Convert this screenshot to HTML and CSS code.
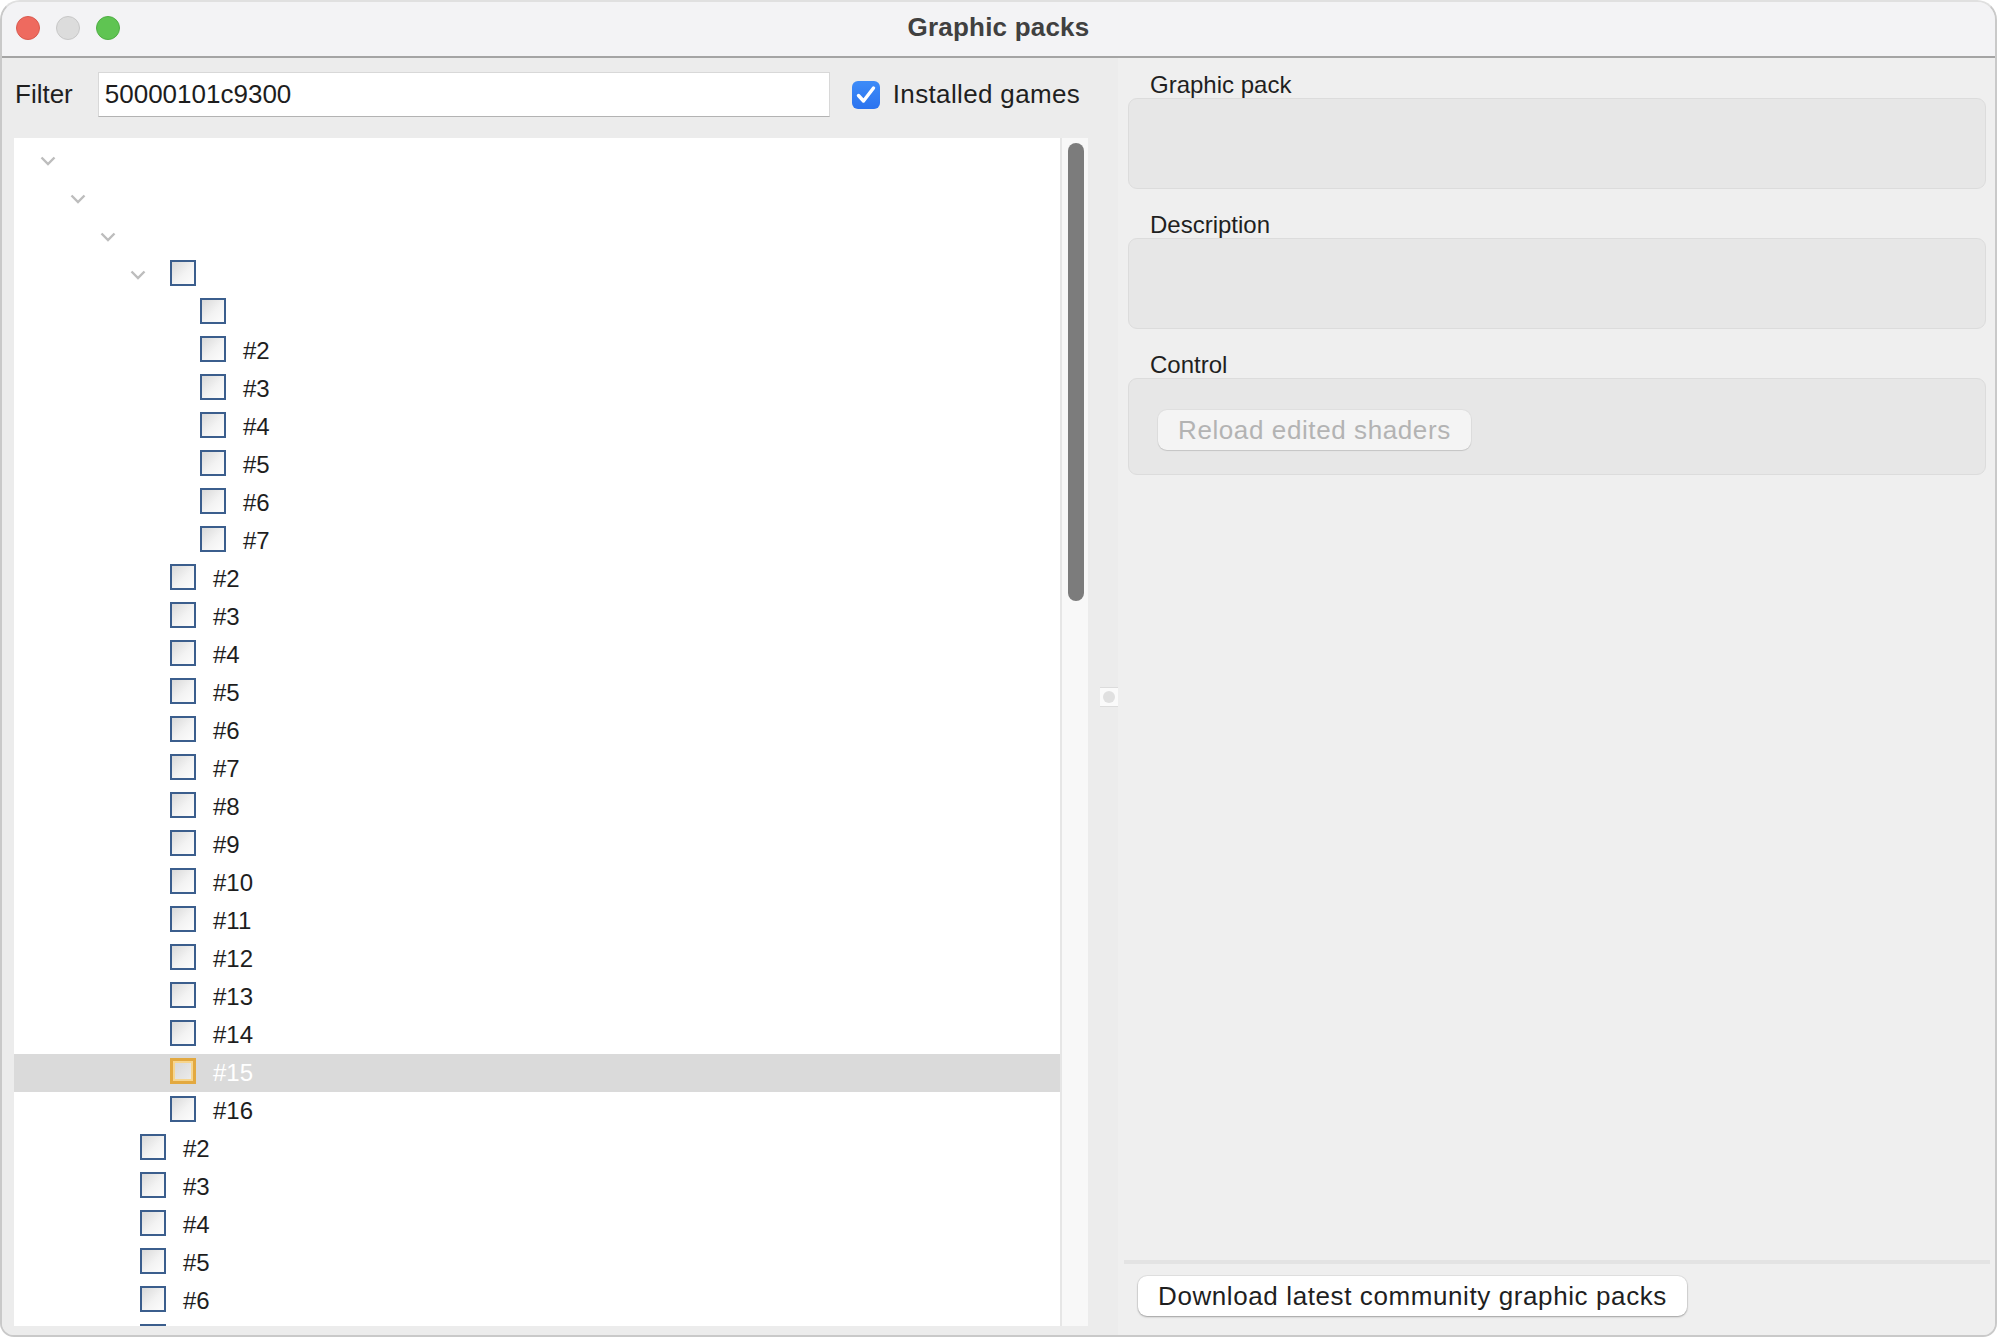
FILE: index.html
```html
<!DOCTYPE html>
<html lang="en">
<head>
    <meta charset="UTF-8">
    <title>Graphic packs</title>
    <link rel="stylesheet" href="styles.css">
</head>
<body>
    <div class="window">
        <div class="titlebar">
            <div class="lights">
                <span class="light red"></span>
                <span class="light gray"></span>
                <span class="light green"></span>
            </div>
            <div class="title">Graphic packs</div>
            <div></div>
        </div>

        <div class="content">
            <!-- left: filter + tree -->
            <div class="left-panel">
                <div class="filter-row">
                    <label class="filter-label">Filter</label>
                    <div class="filter-input">50000101c9300</div>
                    <span class="mac-check">
                        <svg width="28" height="28" viewBox="0 0 28 28"><path d="M6.5 14.5 L11.5 20 L21.5 7" fill="none" stroke="#fff" stroke-width="3.4" stroke-linecap="round" stroke-linejoin="round"/></svg>
                    </span>
                    <span class="check-label">Installed games</span>
                </div>

                <div class="tree-wrap">
                    <div class="tree">
                        <div class="row d0"><span class="tog"><svg width="16" height="10" viewBox="0 0 16 10"><polyline points="1.5,1.5 8,8 14.5,1.5" fill="none" stroke="#bdbdbd" stroke-width="2.4"/></svg></span></div>
                        <div class="row d1"><span class="tog"><svg width="16" height="10" viewBox="0 0 16 10"><polyline points="1.5,1.5 8,8 14.5,1.5" fill="none" stroke="#bdbdbd" stroke-width="2.4"/></svg></span></div>
                        <div class="row d2"><span class="tog"><svg width="16" height="10" viewBox="0 0 16 10"><polyline points="1.5,1.5 8,8 14.5,1.5" fill="none" stroke="#bdbdbd" stroke-width="2.4"/></svg></span></div>
                        <div class="row d3"><span class="tog"><svg width="16" height="10" viewBox="0 0 16 10"><polyline points="1.5,1.5 8,8 14.5,1.5" fill="none" stroke="#bdbdbd" stroke-width="2.4"/></svg></span><span class="cb"></span></div>
                        <div class="row d4"><span class="tog"></span><span class="cb"></span></div>
                        <div class="row d4"><span class="tog"></span><span class="cb"></span><span class="lbl">#2</span></div>
                        <div class="row d4"><span class="tog"></span><span class="cb"></span><span class="lbl">#3</span></div>
                        <div class="row d4"><span class="tog"></span><span class="cb"></span><span class="lbl">#4</span></div>
                        <div class="row d4"><span class="tog"></span><span class="cb"></span><span class="lbl">#5</span></div>
                        <div class="row d4"><span class="tog"></span><span class="cb"></span><span class="lbl">#6</span></div>
                        <div class="row d4"><span class="tog"></span><span class="cb"></span><span class="lbl">#7</span></div>
                        <div class="row d3"><span class="tog"></span><span class="cb"></span><span class="lbl">#2</span></div>
                        <div class="row d3"><span class="tog"></span><span class="cb"></span><span class="lbl">#3</span></div>
                        <div class="row d3"><span class="tog"></span><span class="cb"></span><span class="lbl">#4</span></div>
                        <div class="row d3"><span class="tog"></span><span class="cb"></span><span class="lbl">#5</span></div>
                        <div class="row d3"><span class="tog"></span><span class="cb"></span><span class="lbl">#6</span></div>
                        <div class="row d3"><span class="tog"></span><span class="cb"></span><span class="lbl">#7</span></div>
                        <div class="row d3"><span class="tog"></span><span class="cb"></span><span class="lbl">#8</span></div>
                        <div class="row d3"><span class="tog"></span><span class="cb"></span><span class="lbl">#9</span></div>
                        <div class="row d3"><span class="tog"></span><span class="cb"></span><span class="lbl">#10</span></div>
                        <div class="row d3"><span class="tog"></span><span class="cb"></span><span class="lbl">#11</span></div>
                        <div class="row d3"><span class="tog"></span><span class="cb"></span><span class="lbl">#12</span></div>
                        <div class="row d3"><span class="tog"></span><span class="cb"></span><span class="lbl">#13</span></div>
                        <div class="row d3"><span class="tog"></span><span class="cb"></span><span class="lbl">#14</span></div>
                        <div class="row d3 selected"><span class="tog"></span><span class="cb"></span><span class="lbl">#15</span></div>
                        <div class="row d3"><span class="tog"></span><span class="cb"></span><span class="lbl">#16</span></div>
                        <div class="row d2"><span class="tog"></span><span class="cb"></span><span class="lbl">#2</span></div>
                        <div class="row d2"><span class="tog"></span><span class="cb"></span><span class="lbl">#3</span></div>
                        <div class="row d2"><span class="tog"></span><span class="cb"></span><span class="lbl">#4</span></div>
                        <div class="row d2"><span class="tog"></span><span class="cb"></span><span class="lbl">#5</span></div>
                        <div class="row d2"><span class="tog"></span><span class="cb"></span><span class="lbl">#6</span></div>
                        <div class="row d2"><span class="tog"></span><span class="cb"></span></div>
                    </div>
                    <div class="scroll-track">
                        <div class="scroll-thumb"></div>
                    </div>
                </div>
            </div>

            <!-- splitter -->
            <div class="splitter">
                <div class="grip"><span></span></div>
            </div>

            <!-- right: details -->
            <div class="right-panel">
                <div class="group-label">Graphic pack</div>
                <div class="group-box"></div>

                <div class="group-label">Description</div>
                <div class="group-box"></div>

                <div class="group-label">Control</div>
                <div class="group-box control-box">
                    <button class="btn disabled">Reload edited shaders</button>
                </div>

                <div class="spacer"></div>

                <div class="separator"></div>
                <div class="footer">
                    <button class="btn">Download latest community graphic packs</button>
                </div>
            </div>
        </div>
    </div>
</body>
</html>
```

FILE: styles.css
```css
* {
    box-sizing: border-box;
}
body {
    margin: 0;
    background-color: #fff;
    font-family: "Liberation Sans", Arial, sans-serif;
    color: #1f1f1f;
}
.window {
    width: 1997px;
    height: 1337px;
    border: 2px solid #c9c9c9;
    border-top-color: #e0e0e0;
    border-radius: 20px 20px 14px 14px;
    overflow: hidden;
    display: flex;
    flex-direction: column;
    background-color: #efefef;
}
.titlebar {
    height: 56px;
    flex-shrink: 0;
    background-color: #f3f3f5;
    border-bottom: 2px solid #a4a4a4;
    display: grid;
    grid-template-columns: 1fr auto 1fr;
    align-items: center;
    padding-bottom: 3px;
}
.lights {
    display: flex;
    gap: 16px;
    padding-left: 14px;
}
.light {
    width: 24px;
    height: 24px;
    border-radius: 50%;
    border: 1px solid;
}
.light.red {
    background-color: #ee6a5f;
    border-color: #d95a4f;
}
.light.gray {
    background-color: #dcdcdc;
    border-color: #c7c7c7;
}
.light.green {
    background-color: #5fc452;
    border-color: #4fae44;
}
.title {
    font-size: 26px;
    font-weight: bold;
    color: #404040;
    letter-spacing: 0.2px;
}
.content {
    flex: 1;
    display: flex;
    min-height: 0;
}

/* left side */
.left-panel {
    width: 1086px;
    flex-shrink: 0;
    background-color: #ececec;
    padding: 14px 0 9px 12px;
    display: flex;
    flex-direction: column;
}
.filter-row {
    display: flex;
    align-items: center;
    height: 45px;
    margin-bottom: 21px;
}
.filter-label {
    font-size: 26px;
    margin-left: 1px;
    margin-right: 25px;
}
.filter-input {
    width: 732px;
    height: 45px;
    background-color: #fff;
    border: 1px solid #d8d8d8;
    border-bottom-color: #b3b3b3;
    font-size: 26px;
    line-height: 43px;
    padding-left: 6px;
    color: #1d1d1d;
}
.mac-check {
    width: 28px;
    height: 28px;
    margin-left: 22px;
    border-radius: 6px;
    background: linear-gradient(#3e8cf8, #2b73ef);
    display: flex;
}
.check-label {
    font-size: 26px;
    margin-left: 13px;
    letter-spacing: 0.35px;
}
.tree-wrap {
    flex: 1;
    display: flex;
    min-height: 0;
}
.tree {
    width: 1046px;
    background-color: #fff;
    padding-top: 4px;
    overflow: hidden;
}
.row {
    height: 38px;
    display: flex;
    align-items: center;
    font-size: 24px;
    color: #1e1e1e;
}
.row.d0 { padding-left: 19px; }
.row.d1 { padding-left: 49px; }
.row.d2 { padding-left: 79px; }
.row.d3 { padding-left: 109px; }
.row.d4 { padding-left: 139px; }
.tog {
    width: 30px;
    height: 38px;
    display: flex;
    align-items: center;
    justify-content: center;
}
.cb {
    width: 26px;
    height: 26px;
    margin-left: 17px;
    margin-bottom: 4px;
    border: 2px solid #3b5e8d;
    background: linear-gradient(135deg, #d9d9d9, #f3f3f3 55%, #fdfdfd);
}
.lbl {
    margin-left: 17px;
}
.row.selected {
    background-color: #dadada;
}
.row.selected .lbl {
    color: #fff;
}
.row.selected .cb {
    border: 3px solid #e3a940;
    background: linear-gradient(135deg, #d6d6d6, #ededed);
    box-shadow: inset 0 0 0 2px #f6d58e;
}
.scroll-track {
    width: 28px;
    background-color: #f8f8f8;
    border-left: 2px solid #e6e6e6;
    padding: 5px 0 0 6px;
}
.scroll-thumb {
    width: 16px;
    height: 458px;
    border-radius: 8px;
    background-color: #7c7c7c;
}

/* splitter */
.splitter {
    width: 30px;
    flex-shrink: 0;
    background-color: #ececec;
    padding-left: 12px;
    display: flex;
    align-items: center;
}
.grip {
    width: 18px;
    height: 20px;
    background-color: #fafafa;
    border-top: 1px solid #dcdcdc;
    border-bottom: 1px solid #dcdcdc;
    display: flex;
    align-items: center;
    justify-content: center;
}
.grip span {
    width: 12px;
    height: 12px;
    border-radius: 50%;
    background-color: #e0e0e0;
}

/* right side */
.right-panel {
    flex: 1;
    background-color: #efefef;
    padding: 14px 9px 19px 10px;
    display: flex;
    flex-direction: column;
}
.group-label {
    font-size: 24px;
    line-height: 26px;
    padding-left: 22px;
    margin-top: 23px;
    color: #1f1f1f;
}
.group-label:first-child {
    margin-top: 0;
}
.group-box {
    height: 91px;
    background-color: #e7e7e7;
    border: 1px solid #dcdcdc;
    border-radius: 9px;
}
.control-box {
    height: 97px;
    padding: 31px 0 0 29px;
}
.btn {
    font-family: "Liberation Sans", Arial, sans-serif;
    font-size: 26px;
    letter-spacing: 0.6px;
    height: 40px;
    padding: 0 20px;
    border: none;
    border-radius: 9px;
    background-color: #fff;
    color: #1f1f1f;
    box-shadow: 0 1px 2px rgba(0,0,0,0.3), 0 0 0 1px rgba(0,0,0,0.05);
}
.btn.disabled {
    background-color: #f4f4f4;
    color: #b3b3b3;
    box-shadow: 0 1px 1px rgba(0,0,0,0.12), 0 0 0 1px rgba(0,0,0,0.03);
}
.spacer {
    flex: 1;
}
.separator {
    height: 4px;
    background-color: #e3e3e3;
    margin: 0 -4px 0 -4px;
}
.footer {
    padding: 12px 0 0 10px;
}
```
